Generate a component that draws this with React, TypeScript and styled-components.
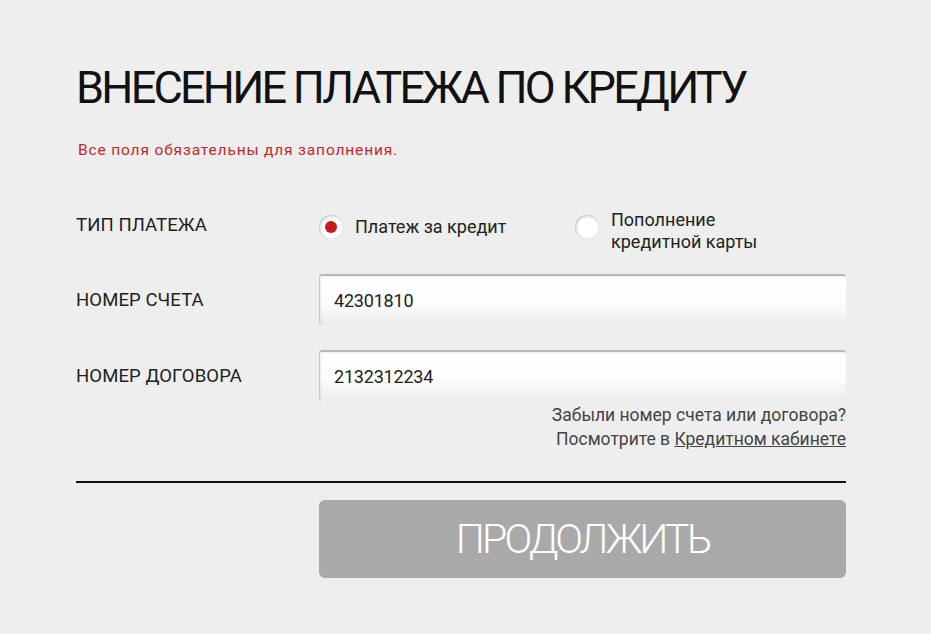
import React, { useState } from "react";
import styled, { createGlobalStyle } from "styled-components";

const GlobalStyle = createGlobalStyle`
  html, body {
    margin: 0;
    padding: 0;
    background: #eeeeee;
  }
  body {
    font-family: Roboto, "Liberation Sans", sans-serif;
    color: #1a1a1a;
  }
`;

export default function App() {
  const [payType, setPayType] = useState("credit");
  const [account, setAccount] = useState("42301810");
  const [contract, setContract] = useState("2132312234");

  return (
    <>
      <GlobalStyle />
      <Page>
        <Title>ВНЕСЕНИЕ ПЛАТЕЖА ПО КРЕДИТУ</Title>
        <Notice>Все поля обязательны для заполнения.</Notice>

        <Form onSubmit={(e) => e.preventDefault()}>
          <Row>
            <Label>ТИП ПЛАТЕЖА</Label>
            <Radios>
              <RadioOption onClick={() => setPayType("credit")}>
                <RadioDot checked={payType === "credit"} />
                <RadioText lines={1}>Платеж за кредит</RadioText>
              </RadioOption>
              <RadioOption onClick={() => setPayType("card")}>
                <RadioDot checked={payType === "card"} />
                <RadioText lines={2}>
                  Пополнение
                  <br />
                  кредитной карты
                </RadioText>
              </RadioOption>
            </Radios>
          </Row>

          <FieldRow>
            <Label>НОМЕР СЧЕТА</Label>
            <Input
              value={account}
              onChange={(e) => setAccount(e.target.value)}
            />
          </FieldRow>

          <FieldRow>
            <Label>НОМЕР ДОГОВОРА</Label>
            <Input
              value={contract}
              onChange={(e) => setContract(e.target.value)}
            />
          </FieldRow>

          <Hint>
            Забыли номер счета или договора?
            <br />
            Посмотрите в <HintLink href="#">Кредитном кабинете</HintLink>
          </Hint>

          <Divider />

          <ButtonRow>
            <SubmitButton type="submit">ПРОДОЛЖИТЬ</SubmitButton>
          </ButtonRow>
        </Form>
      </Page>
    </>
  );
}

const Page = styled.div`
  width: 770px;
  padding: 61px 0 0 76px;
`;

const Title = styled.h1`
  margin: 0;
  font-size: 45px;
  font-weight: 400;
  line-height: 54px;
  color: #111111;
  letter-spacing: -2.75px;
`;

const Notice = styled.p`
  margin: 25px 0 0 2px;
  font-size: 15.5px;
  line-height: 20px;
  color: #c4282b;
  letter-spacing: 0.85px;
`;

const Form = styled.form`
  margin-top: 53px;
  display: flex;
  flex-direction: column;
`;

const Row = styled.div`
  display: grid;
  grid-template-columns: 243px 1fr;
  align-items: start;
  height: 61px;
`;

const FieldRow = styled.div`
  display: grid;
  grid-template-columns: 243px 1fr;
  align-items: center;
  margin-bottom: 25px;
`;

const Label = styled.div`
  font-size: 18.5px;
  line-height: 24px;
  color: #222222;
  letter-spacing: 0.1px;
`;

const Radios = styled.div`
  display: flex;
`;

const RadioOption = styled.label`
  display: flex;
  align-items: flex-start;
  gap: 12px;
  width: 256px;
  cursor: pointer;
`;

const RadioDot = styled.span<{ checked: boolean }>`
  flex: none;
  margin-top: 2px;
  width: 24px;
  height: 24px;
  border-radius: 50%;
  background: #ffffff;
  box-shadow: inset 1px 1px 3px rgba(0, 0, 0, 0.25), 0 0 1px rgba(0, 0, 0, 0.15);
  position: relative;
  &::after {
    content: "";
    position: absolute;
    left: 6px;
    top: 6px;
    width: 12px;
    height: 12px;
    border-radius: 50%;
    background: #c8191f;
    display: ${(p) => (p.checked ? "block" : "none")};
  }
`;

const RadioText = styled.span<{ lines: number }>`
  margin-top: ${(p) => (p.lines > 1 ? "-4px" : "3px")};
  font-size: 18px;
  line-height: 22px;
  color: #222222;
`;

const Input = styled.input`
  box-sizing: border-box;
  width: 527px;
  height: 51px;
  padding: 0 14px;
  font-family: Roboto, "Liberation Sans", sans-serif;
  font-size: 18px;
  letter-spacing: -0.2px;
  color: #222222;
  border: none;
  border-top: 2px solid #b9b9b9;
  border-left: 1px solid #c8c8c8;
  border-radius: 3px;
  background: linear-gradient(#ffffff 0%, #fdfdfd 55%, #ececec 100%);
  box-shadow: inset 1px 1px 2px rgba(0, 0, 0, 0.08);
  outline: none;
`;

const Hint = styled.div`
  margin-top: -23px;
  text-align: right;
  font-size: 17.5px;
  line-height: 24px;
  color: #444444;
`;

const HintLink = styled.a`
  color: #444444;
  text-decoration: underline;
`;

const Divider = styled.hr`
  margin: 30px 0 0 0;
  border: none;
  height: 2px;
  background: #111111;
`;

const ButtonRow = styled.div`
  display: grid;
  grid-template-columns: 243px 1fr;
  margin-top: 17px;
  & > * {
    grid-column: 2;
  }
`;

const SubmitButton = styled.button`
  height: 78px;
  border: none;
  border-radius: 6px;
  background: #a9a9a9;
  color: #ffffff;
  font-family: Roboto, "Liberation Sans", sans-serif;
  font-size: 41px;
  font-weight: 300;
  letter-spacing: -2.8px;
  cursor: pointer;
`;
